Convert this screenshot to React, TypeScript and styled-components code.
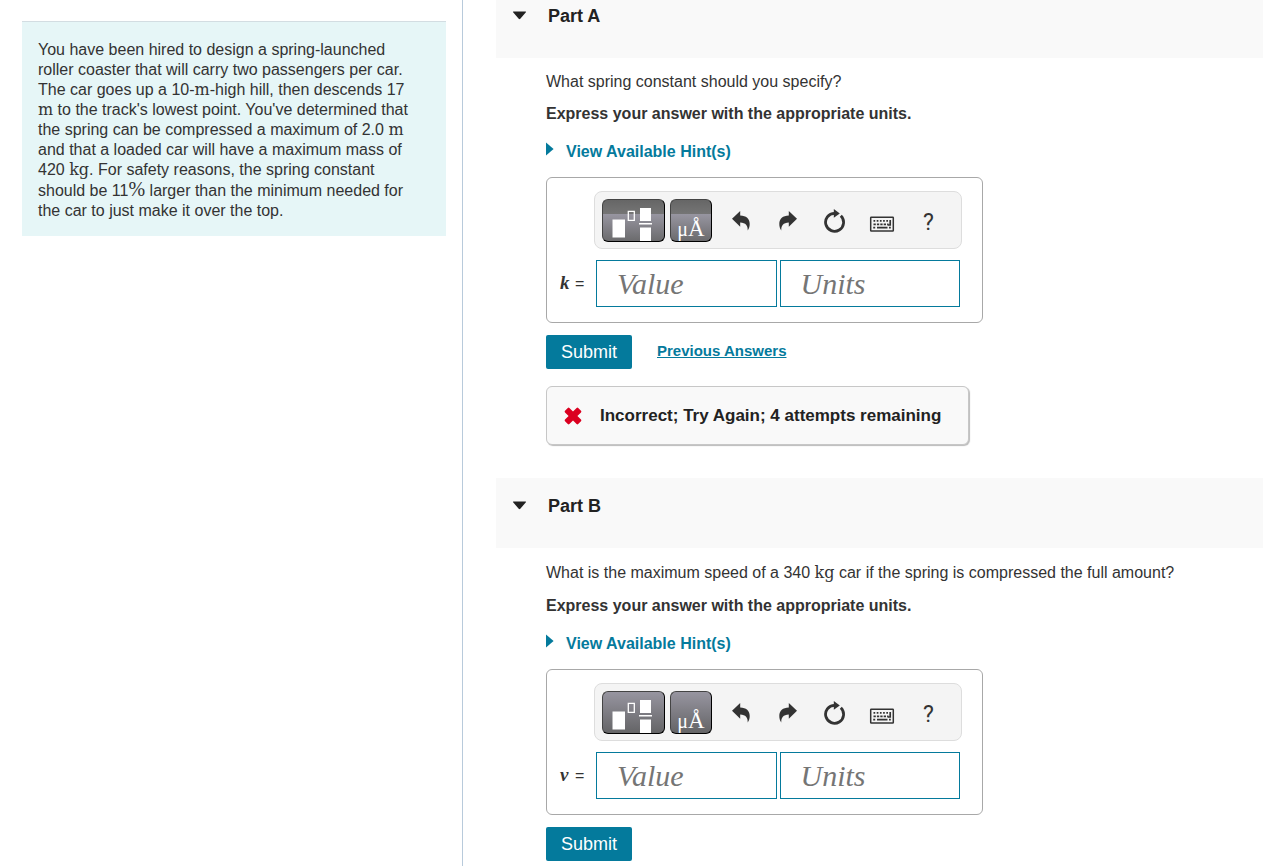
import React from "react";
import styled, { createGlobalStyle, css } from "styled-components";

const GlobalStyle = createGlobalStyle`
  *, *::before, *::after { box-sizing: border-box; }
  body {
    margin: 0;
    background: #fff;
    color: #333;
    font-family: "Liberation Sans", Arial, sans-serif;
    font-size: 16px;
    line-height: 20px;
  }
  button, input { font: inherit; color: inherit; }
`;

const Page = styled.div`
  display: grid;
  grid-template-columns: 463fr 800fr;
  min-height: 100vh;
`;

const Sidebar = styled.aside`
  padding: 21px 16px 0 22px;
  border-right: 1px solid #b8cadb;
`;

const Problem = styled.p`
  margin: 0;
  padding: 18px 24px 15px 16px;
  border-top: 1px solid #d3dde2;
  background: #e6f6f7;
`;

const Unit = styled.span`
  font-family: "DejaVu Serif", serif;
  font-size: 16px;
  line-height: 17px;
`;

const Percent = styled.span`
  font-family: "Liberation Serif", "Times New Roman", serif;
  font-size: 20px;
  line-height: 19px;
`;

const Main = styled.main`
  min-width: 0;
  padding-left: 33px;
`;

const PartHeader = styled.header<{ $first?: boolean }>`
  padding: ${(p) => (p.$first ? 6 : 18)}px 16px 32px;
  background: #f9f9f9;
`;

const PartToggle = styled.button`
  display: flex;
  align-items: center;
  gap: 21px;
  padding: 0;
  border: 0;
  background: none;
  color: #222;
  cursor: pointer;
`;

const PartTitle = styled.span`
  font-size: 18px;
  line-height: 20px;
  font-weight: bold;
`;

const PartBody = styled.div`
  padding: 14px 16px 0 50px;
`;

const Question = styled.p`
  margin: 0;
  ${Unit} { line-height: 22px; }
`;

const Instruction = styled.p`
  margin: 12px 0 18px;
  font-weight: bold;
`;

const HintLink = styled.a`
  display: flex;
  gap: 12px;
  width: fit-content;
  color: #047a9c;
  font-weight: bold;
  text-decoration: none;
`;

const AnswerBox = styled.section`
  width: 437px;
  max-width: 100%;
  margin-top: 15px;
  padding: 13px 20px 15px 13px;
  border: 1px solid #a8a8a8;
  border-radius: 6px;
`;

const Toolbar = styled.div`
  display: flex;
  align-items: center;
  height: 58px;
  margin-left: 34px;
  padding: 0 0 0 7px;
  border: 1px solid #ddd;
  border-radius: 8px;
  background: #f4f4f4;
`;

const shade = {
  split: css`
    background: linear-gradient(#666 0, #757575 34%, #9795a0 35%, #6b6b6d 100%);
  `,
  plain: css`
    background: linear-gradient(#9795a0, #646466);
  `,
};

const PaletteButton = styled.button<{ $wide?: boolean; $shade: "split" | "plain" }>`
  display: flex;
  align-items: flex-end;
  justify-content: center;
  flex: none;
  width: ${(p) => (p.$wide ? 63 : 42)}px;
  height: 43px;
  margin-right: 5px;
  padding: 0;
  border: 1px solid #000;
  border-color: #444 #000 #000 #444;
  border-radius: 6px;
  color: #fff;
  font-family: "Liberation Serif", "Times New Roman", serif;
  font-size: 23px;
  line-height: 24px;
  overflow: hidden;
  ${(p) => shade[p.$shade]}
`;

const Mu = styled.span`
  font-size: 20px;
`;

const ToolButton = styled.button`
  display: flex;
  align-items: center;
  justify-content: center;
  width: 47px;
  height: 40px;
  padding: 2px 0 0;
  border: 0;
  background: none;
  color: #333;
`;

const HelpMark = styled.span`
  padding-top: 4px;
  font-family: Roboto, sans-serif;
  font-size: 23px;
  line-height: 24px;
`;

const Fields = styled.div`
  display: flex;
  align-items: center;
  gap: 3px;
  margin-top: 11px;
  padding-right: 2px;
`;

const VariableLabel = styled.label`
  flex: none;
  width: 33px;
`;

const Variable = styled.i`
  display: inline-block;
  width: 15px;
  font-family: "Liberation Serif", "Times New Roman", serif;
  font-size: 19px;
  font-weight: bold;
`;

const AnswerInput = styled.input`
  flex: 1;
  width: 180px;
  min-width: 0;
  height: 47px;
  padding: 0 20px;
  border: 1px solid #047a9c;
  border-radius: 0;
  background: #fff;
  font-family: "Liberation Serif", "Times New Roman", serif;
  font-size: 30px;
  font-style: italic;
  &::placeholder { color: #757575; opacity: 1; }
`;

const Actions = styled.div`
  display: flex;
  align-items: center;
  gap: 25px;
  margin-top: 12px;
`;

const SubmitButton = styled.button`
  width: 86px;
  height: 34px;
  padding: 0;
  border: 0;
  border-radius: 2px;
  background: #047a9c;
  color: #fff;
  font-size: 18px;
`;

const PreviousLink = styled.a`
  padding-bottom: 2px;
  color: #047a9c;
  font-size: 15px;
  font-weight: bold;
  text-decoration: underline;
`;

const Feedback = styled.div`
  display: flex;
  align-items: center;
  gap: 18px;
  width: fit-content;
  min-width: 423px;
  height: 59px;
  margin: 17px 0 33px;
  padding: 0 17px;
  border: 1px solid #c7c7c7;
  border-radius: 6px;
  background: #f9f9f9;
  box-shadow: 1px 1px 1px #bbb;
  color: #222;
  font-size: 17px;
  font-weight: bold;
`;

const CaretDown = () => (
  <svg width="15" height="10" viewBox="0 0 15 10" aria-hidden="true">
    <path d="M1.5 .5h12q1 0 .4.8L8.3 7.7q-.8.9-1.6 0L1.1 1.3q-.6-.8.4-.8z" fill="#222" />
  </svg>
);

const CaretRight = () => (
  <svg width="8" height="15" viewBox="0 0 8 15" aria-hidden="true">
    <path d="M0 0.5 7.6 7 0 13.5z" fill="#047a9c" />
  </svg>
);

const TemplateIcon = () => (
  <svg width="61" height="41" viewBox="0 0 61 41" aria-hidden="true">
    <g fill="#fff">
      <path d="M9.500 19.500H22v18H9.500zM37 8h11v13H37zM36 23h13v1.500H36zM37 27.500h11V41H37z" />
      <path d="M25.300 11.300h6v9h-6z" fill="none" stroke="#fff" strokeWidth="1.300" />
    </g>
  </svg>
);

const UndoIcon = ({ mirrored = false }: { mirrored?: boolean }) => (
  <svg width="18" height="20" viewBox="0 0 18 20" aria-hidden="true">
    <path
      transform={mirrored ? "matrix(-1 0 0 1 18 0)" : undefined}
      d="M0 7.700 8.200 0v4.600c6 .1 9.500 3.300 9.500 8.400 0 2.500-.6 4.700-2 6.600.3-5-2-8-7.500-8.200v4.400z"
      fill="#333"
    />
  </svg>
);

const ResetIcon = () => (
  <svg width="22" height="24" viewBox="0 0 22 24" aria-hidden="true">
    <path d="M16.800 6.800A9 9 0 1 1 10.500 4.300" fill="none" stroke="#333" strokeWidth="2.800" />
    <path d="M9.800 0 15.800 4.500 9.800 8.800z" fill="#333" />
  </svg>
);

const KeyboardIcon = () => (
  <svg width="26" height="22" viewBox="0 0 26 22" aria-hidden="true">
    <rect x="1.700" y="7.200" width="22.600" height="13.800" rx=".6" fill="none" stroke="#333" strokeWidth="1.500" />
    <g stroke="#333" strokeWidth="1.700" fill="none">
      <path d="M4.500 10.900h15" strokeDasharray="1.700 1.500" />
      <path d="M4.500 14.300h15" strokeDasharray="2.300 1.100" />
      <path d="M4.200 17.700h2M8 17.700h10.500M20 17.700h1.800" />
      <path d="M21.200 10v5h-2.500" />
    </g>
  </svg>
);

const CrossIcon = () => (
  <svg width="18" height="18" viewBox="0 0 18 18" aria-hidden="true">
    <path
      d="M1 3.800 3.800 1q.8-.8 1.600 0L9 4.600 12.600 1q.8-.8 1.600 0L17 3.800q.8.8 0 1.600L13.400 9l3.600 3.600q.8.8 0 1.600L14.200 17q-.8.8-1.600 0L9 13.400 5.400 17q-.8.8-1.600 0L1 14.200q-.8-.8 0-1.600L4.600 9 1 5.400q-.8-.8 0-1.600z"
      fill="#db0020"
    />
  </svg>
);

interface AnswerProps {
  id: string;
  variable: string;
  shading: "split" | "plain";
}

const Answer = ({ id, variable, shading }: AnswerProps) => (
  <AnswerBox>
    <Toolbar role="toolbar" aria-label="Math tools">
      <PaletteButton type="button" $wide $shade={shading} aria-label="Templates">
        <TemplateIcon />
      </PaletteButton>
      <PaletteButton type="button" $shade={shading} aria-label="Symbols">
        <Mu>μ</Mu>Å
      </PaletteButton>
      <ToolButton type="button" aria-label="Undo"><UndoIcon /></ToolButton>
      <ToolButton type="button" aria-label="Redo"><UndoIcon mirrored /></ToolButton>
      <ToolButton type="button" aria-label="Reset"><ResetIcon /></ToolButton>
      <ToolButton type="button" aria-label="Keyboard shortcuts"><KeyboardIcon /></ToolButton>
      <ToolButton type="button" aria-label="Help"><HelpMark>?</HelpMark></ToolButton>
    </Toolbar>
    <Fields>
      <VariableLabel htmlFor={id}>
        <Variable>{variable}</Variable>=
      </VariableLabel>
      <AnswerInput id={id} placeholder="Value" />
      <AnswerInput aria-label="Units" placeholder="Units" />
    </Fields>
  </AnswerBox>
);

interface PartProps extends AnswerProps {
  title: string;
  first?: boolean;
  question: React.ReactNode;
  children: React.ReactNode;
}

const Part = ({ title, first, question, children, ...answer }: PartProps) => (
  <section>
    <PartHeader $first={first}>
      <PartToggle type="button" aria-expanded="true">
        <CaretDown />
        <PartTitle>{title}</PartTitle>
      </PartToggle>
    </PartHeader>
    <PartBody>
      <Question>{question}</Question>
      <Instruction>Express your answer with the appropriate units.</Instruction>
      <HintLink href="#hints">
        <CaretRight />
        View Available Hint(s)
      </HintLink>
      <Answer {...answer} />
      {children}
    </PartBody>
  </section>
);

export default function App() {
  return (
    <>
      <GlobalStyle />
      <Page>
        <Sidebar>
          <Problem>
            You have been hired to design a spring-launched roller coaster that will carry two
            passengers per car. The car goes up a 10-<Unit>m</Unit>-high hill, then descends 17{" "}
            <Unit>m</Unit> to the track's lowest point. You've determined that the spring can be
            compressed a maximum of 2.0 <Unit>m</Unit> and that a loaded car will have a maximum mass
            of 420 <Unit>kg</Unit>. For safety reasons, the spring constant should be 11
            <Percent>%</Percent> larger than the minimum needed for the car to just make it over the
            top.
          </Problem>
        </Sidebar>
        <Main>
          <Part
            id="spring-constant"
            title="Part A"
            first
            variable="k"
            shading="split"
            question="What spring constant should you specify?"
          >
            <Actions>
              <SubmitButton type="button">Submit</SubmitButton>
              <PreviousLink href="#previous">Previous Answers</PreviousLink>
            </Actions>
            <Feedback role="status">
              <CrossIcon />
              Incorrect; Try Again; 4 attempts remaining
            </Feedback>
          </Part>
          <Part
            id="maximum-speed"
            title="Part B"
            variable="v"
            shading="plain"
            question={
              <>
                What is the maximum speed of a 340 <Unit>kg</Unit> car if the spring is compressed
                the full amount?
              </>
            }
          >
            <Actions>
              <SubmitButton type="button">Submit</SubmitButton>
            </Actions>
          </Part>
        </Main>
      </Page>
    </>
  );
}
